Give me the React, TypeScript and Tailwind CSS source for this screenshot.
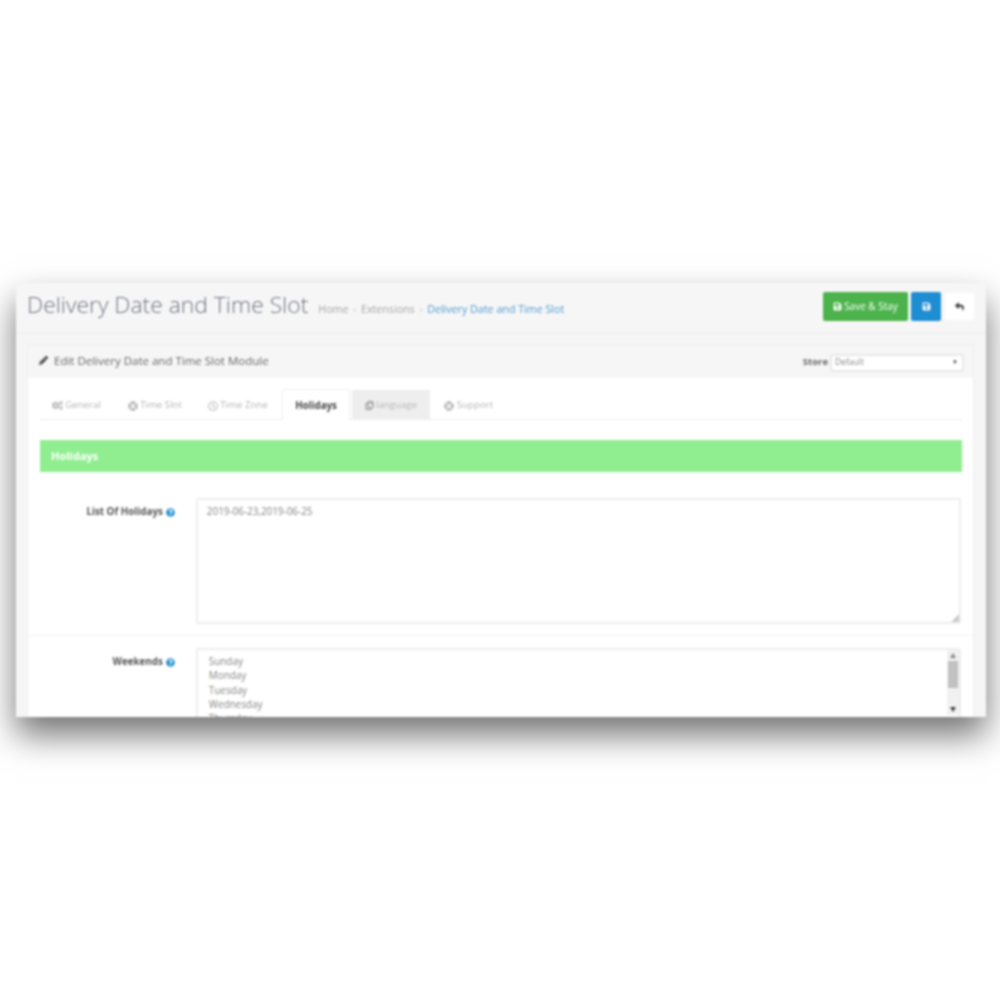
import { FaCogs, FaLifeRing, FaPencilAlt, FaQuestionCircle, FaRegClock, FaRegCopy, FaReply, FaSave } from "react-icons/fa";

const tabs = [
    { name: "General", icon: <FaCogs size={11} />, width: "w-[73px]" },
    { name: "Time Slot", icon: <FaLifeRing size={10} />, width: "w-[84px]" },
    { name: "Time Zone", icon: <FaRegClock size={10} />, width: "w-[85px] pr-[3px]" },
];

const days = ["Sunday", "Monday", "Tuesday", "Wednesday", "Thursday"];

export default function App() {
    return (
        <div className="min-h-[1000px] bg-white pt-[283px] pl-[16px] font-['Open_Sans',sans-serif]">
            <div className="w-[970px] h-[434px] overflow-hidden bg-[#f6f6f6] shadow-[0_18px_32px_rgba(0,0,0,0.55)] blur-[0.8px]">
                <div className="h-[50px] flex items-center justify-between pl-[11px] pr-[12px] border-b border-[#eeeeee]">
                    <div className="flex items-center">
                        <h1 className="text-[22.85px] font-light text-[#6d7480] leading-none mb-[4px] whitespace-nowrap">Delivery Date and Time Slot</h1>
                        <div className="flex items-center ml-[10px] mt-[4px] text-[10.7px] text-[#a5a5a5] whitespace-nowrap">
                            <span>Home</span>
                            <span className="mx-[5px] text-[8px]">›</span>
                            <span>Extensions</span>
                            <span className="mx-[5px] text-[8px]">›</span>
                            <span className="text-[#4f9bd0]">Delivery Date and Time Slot</span>
                        </div>
                    </div>
                    <div className="flex items-center">
                        <button className="w-[85px] h-[29px] mt-[-2px] flex items-center justify-center gap-[2px] rounded-[2px] bg-[#4cb34c] text-white text-[10px]">
                            <FaSave size={9} />
                            Save &amp; Stay
                        </button>
                        <button className="w-[30px] h-[29px] mt-[-2px] ml-[3px] flex items-center justify-center rounded-[2px] bg-[#1f8dd1] text-white">
                            <FaSave size={9} />
                        </button>
                        <button className="w-[29px] h-[27px] mt-[-2px] ml-[4px] flex items-center justify-center rounded-[2px] bg-white text-[#444444]">
                            <FaReply size={9} />
                        </button>
                    </div>
                </div>

                <div className="mt-[11px] ml-[11px] w-[947px] border border-[#eeeeee] bg-white">
                    <div className="h-[33px] flex items-center justify-between bg-[#f6f6f6] pl-[11px] pr-[9px]">
                        <div className="flex items-center gap-[6px] mb-[2px] text-[11.5px] text-[#666666]">
                            <FaPencilAlt size={9} className="text-[#333333]" />
                            Edit Delivery Date and Time Slot Module
                        </div>
                        <div className="flex items-center gap-[2px] mt-[2px]">
                            <span className="text-[9.5px] font-bold text-[#666666]">Store</span>
                            <div className="w-[134px] h-[18px] flex items-center justify-between bg-white border-2 border-[#e8e8e8] rounded-[2px] pl-[3px] pr-[4px] text-[8.5px] text-[#888888]">
                                Default
                                <span className="text-[6px] text-[#444444]">▼</span>
                            </div>
                        </div>
                    </div>

                    <div className="pl-[12px] pr-[11px] pt-[11px]">
                        <div className="flex h-[31px] border-b border-[#eeeeee] text-[9.7px] text-[#b5b5b5]">
                            {tabs.map((tab) => (
                                <div key={tab.name} className={`${tab.width} flex items-center justify-center gap-[2px] h-[30px] pt-[3px]`}>
                                    {tab.icon}
                                    {tab.name}
                                </div>
                            ))}
                            <div className="w-[68px] h-[31px] pt-[3px] flex items-center justify-center bg-white border border-[#eeeeee] border-b-white font-bold text-[#444444] rounded-t-[2px]">
                                Holidays
                            </div>
                            <div className="w-[78px] h-[29px] mt-[1px] ml-[2px] pt-[2px] flex items-center justify-center gap-[2px] bg-[#eeeeee]">
                                <FaRegCopy size={9} className="text-[#777777]" />
                                language
                            </div>
                            <div className="w-[77px] h-[30px] pt-[3px] flex items-center justify-center gap-[3px]">
                                <FaLifeRing size={10} />
                                Support
                            </div>
                        </div>

                        <div className="mt-[20px] h-[32px] flex items-center bg-[#90ee90] px-[11px] text-[11px] font-bold text-white">
                            Holidays
                        </div>
                    </div>

                    <div className="flex mt-[26px] px-[12px]">
                        <div className="w-[134px] pt-[7px] flex items-center justify-end gap-[3px] h-[22px] text-[9.8px] font-bold text-[#555555]">
                            List Of Holidays
                            <FaQuestionCircle size={9} className="text-[#1f8dd1] mr-[-1px]" />
                        </div>
                        <div className="ml-[22px] w-[766px] h-[126px] relative bg-white border-2 border-[#eeeeee] rounded-[2px] px-[9px] py-[4px] text-[9.9px] text-[#888888]">
                            2019-06-23,2019-06-25
                            <svg className="absolute right-0 bottom-0" width="8" height="8" viewBox="0 0 8 8">
                                <path d="M8 0 L8 8 L0 8 Z" fill="#cccccc" />
                            </svg>
                        </div>
                    </div>

                    <div className="mt-[11px] border-t border-[#f4f4f4]" />

                    <div className="flex mt-[12px] px-[12px]">
                        <div className="w-[134px] pt-[7px] flex items-center justify-end gap-[3px] h-[22px] text-[9.8px] font-bold text-[#555555]">
                            Weekends
                            <FaQuestionCircle size={9} className="text-[#1f8dd1] mr-[-1px]" />
                        </div>
                        <div className="ml-[22px] w-[766px] h-[110px] flex justify-between bg-white border-2 border-[#eeeeee] rounded-[2px] pl-[11px] pt-[4px] text-[9.9px] leading-[14.3px] text-[#888888]">
                            <ul>
                                {days.map((day) => (
                                    <li key={day}>{day}</li>
                                ))}
                            </ul>
                            <div className="w-[12px] h-[65px] mt-[-4px] flex flex-col items-center bg-[#f1f1f1]">
                                <svg className="mt-[3px] mb-[3px]" width="6" height="5" viewBox="0 0 6 5">
                                    <path d="M3 0 L6 5 L0 5 Z" fill="#888888" />
                                </svg>
                                <div className="w-[10px] h-[27px] bg-[#c1c1c1]" />
                                <svg className="mt-auto mb-[3px]" width="6" height="5" viewBox="0 0 6 5">
                                    <path d="M0 0 L6 0 L3 5 Z" fill="#444444" />
                                </svg>
                            </div>
                        </div>
                    </div>
                </div>
            </div>
        </div>
    );
}
